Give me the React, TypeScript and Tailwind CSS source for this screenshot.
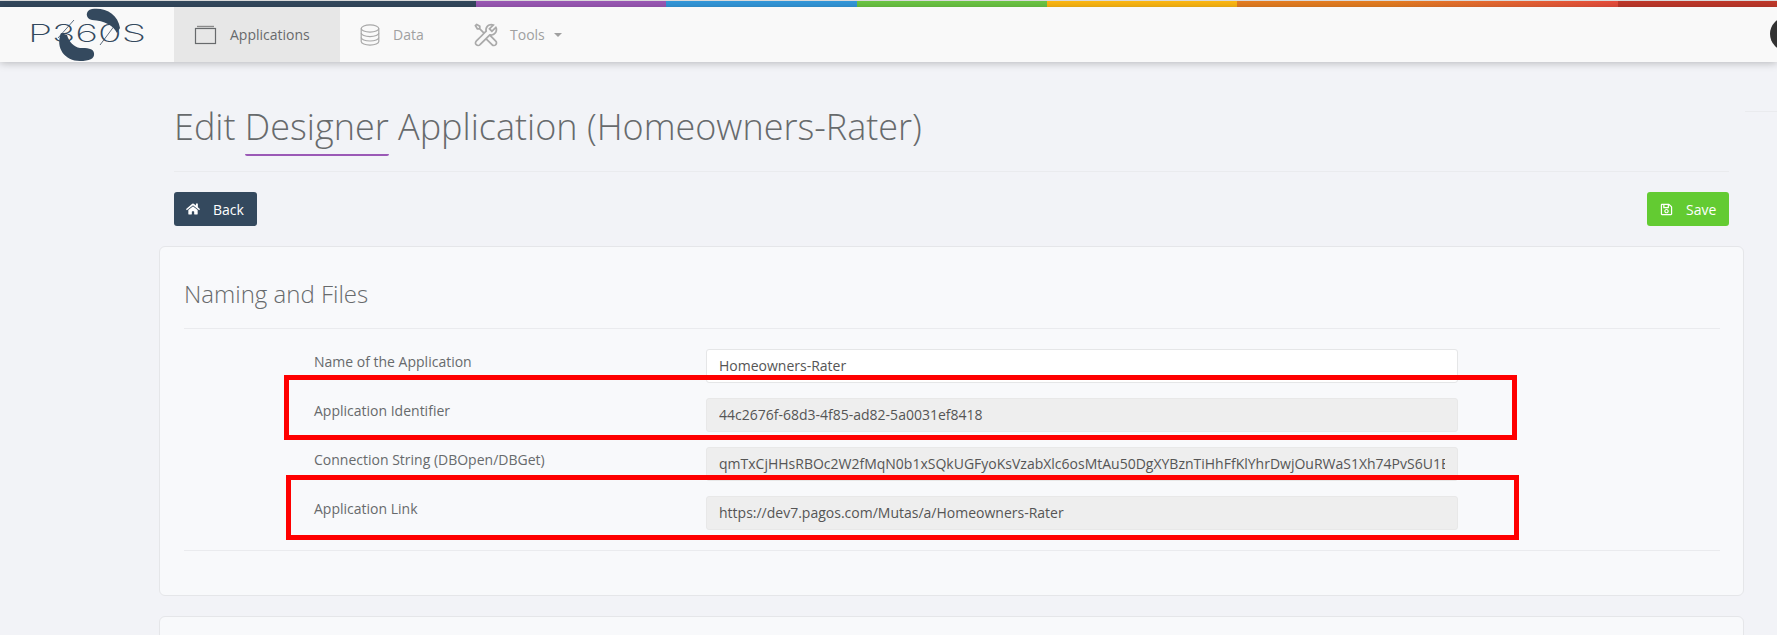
import React from "react";
import { FaHome, FaRegSave } from "react-icons/fa";
import { LiaToolsSolid } from "react-icons/lia";

const font = { fontFamily: '"Open Sans", sans-serif' };

function Logo() {
  return (
    <svg width="122" height="54" viewBox="26 8 122 54" className="shrink-0" aria-label="P360S logo">
      <path d="M92 9 C105 7 118 14 120 28 L117 33 C113 25 105 21 92 20 C85 19 85 10 92 9 Z" fill="#34495e" />
      <path d="M61 33 C55 48 65 61 80 61 C89 61 95 59 94 53 C93 48 87 48 80 48 C74 47 69 42 67 35 Z" fill="#34495e" />
      <text x="28" y="42" fontFamily="Inter, sans-serif" fontWeight="200" fontSize="24" fill="#34495e" textLength="118" lengthAdjust="spacingAndGlyphs">P360S</text>
      <path d="M58 38 L74 20 M100 45 L115 25" stroke="#34495e" strokeWidth="0.8" fill="none" />
    </svg>
  );
}

function AppsIcon() {
  return (
    <svg width="23" height="20" viewBox="0 0 23 20" fill="none" className="mr-[13px] shrink-0">
      <rect x="1.5" y="3.5" width="20" height="15" stroke="#676a6c" strokeWidth="1.2" />
      <path d="M3 1.5h17" stroke="#8a8a8a" strokeWidth="1.4" />
    </svg>
  );
}

function DbIcon() {
  return (
    <svg width="20" height="22" viewBox="0 0 20 22" fill="none" stroke="#a8a8a8" strokeWidth="1.2" className="mr-[13px] shrink-0">
      <ellipse cx="10" cy="4.5" rx="8.8" ry="3.6" />
      <path d="M1.2 4.5v13c0 2 3.9 3.6 8.8 3.6s8.8-1.6 8.8-3.6v-13" />
      <path d="M1.2 9c0 2 3.9 3.6 8.8 3.6s8.8-1.6 8.8-3.6" />
      <path d="M1.2 13.4c0 2 3.9 3.6 8.8 3.6s8.8-1.6 8.8-3.6" />
    </svg>
  );
}

function ColorBar() {
  return (
    <div className="flex h-[7px] border-t border-[#dcdcdc]">
      <div className="w-[476px] bg-[#34495e]" />
      <div className="w-[190px] bg-[#9b59b6]" />
      <div className="w-[191px] bg-[#3498db]" />
      <div className="w-[190px] bg-[#6cc644]" />
      <div className="w-[190px] bg-[#fdb813]" />
      <div className="w-[381px] bg-gradient-to-r from-[#e67e22] from-40% to-[#e74c3c]" />
      <div className="flex-1 bg-[#c0392b]" />
    </div>
  );
}

function Row({ label, value, readOnly }: { label: string; value: string; readOnly?: boolean }) {
  return (
    <div className="flex h-[34px] pl-[130px] pr-[262px]">
      <div className="w-[392px] shrink-0 pt-[3px] text-[14px] leading-[20px] text-[#676a6c]">{label}</div>
      <div
        className={`min-w-0 flex-1 rounded-[3px] border px-[12px] pt-[6px] text-[14px] leading-[20px] text-[#555] ${
          readOnly ? "border-[#e8e8e8] bg-[#eeeeee]" : "border-[#e5e6e7] bg-white"
        }`}
      >
        <div className="overflow-hidden whitespace-nowrap">{value}</div>
      </div>
    </div>
  );
}

export default function App() {
  return (
    <div className="relative h-[635px] w-full overflow-hidden bg-[#f2f3f7]" style={font}>
      <ColorBar />
      <nav className="relative flex h-[55px] items-stretch bg-[#f9f9f9] shadow-[0_1px_8px_rgba(0,0,0,0.25)]">
        <div className="flex w-[174px] items-center pl-[26px]">
          <Logo />
        </div>
        <div className="flex w-[166px] items-center bg-[#e7e7e7] pl-[20px] text-[14px] text-[#676a6c]">
          <AppsIcon />
          Applications
        </div>
        <div className="flex w-[98px] items-center pl-[20px] text-[14px] text-[#a0a0a0]">
          <DbIcon />
          Data
        </div>
        <div className="flex items-center pl-[34px] text-[14px] text-[#a0a0a0]">
          <LiaToolsSolid size={28} className="mr-[10px] text-[#aaa]" />
          Tools
          <span className="ml-[9px] h-0 w-0 border-x-[4px] border-t-[4px] border-x-transparent border-t-[#a0a0a0]" />
        </div>
        <div className="absolute left-[1770px] top-[10px] h-[34px] w-[34px] rounded-full bg-[#333]" />
      </nav>

      <main className="pl-[174px] pr-[48px]">
        <h1 className="mt-[41px] h-[48px] text-[36px] font-light leading-[48px] text-[#676a6c]">
          Edit{" "}
          <span className="relative">
            Designer
            <span className="absolute bottom-[-5px] left-0 right-0 h-[2px] rounded-b-[2px] bg-[#9b59b6]" />
          </span>{" "}
          Application (Homeowners-Rater)
        </h1>
        <hr className="mt-[20px] border-[#eaebee]" />
        <div className="mt-[20px] flex justify-between">
          <button className="flex h-[34px] w-[83px] items-center rounded-[3px] bg-[#34495e] pl-[12px] text-[14px] text-white">
            <FaHome size={14} className="mr-[13px]" />
            Back
          </button>
          <button className="flex h-[34px] w-[82px] items-center rounded-[3px] bg-[#63cb32] pl-[13px] text-[14px] text-white">
            <FaRegSave size={13} className="mr-[13px]" />
            Save
          </button>
        </div>
      </main>

      <section className="ml-[159px] mr-[33px] mt-[20px] h-[350px] rounded-[6px] border border-[#e5e6e9] bg-[#f8f9fb] pl-[24px] pr-[23px]">
        <h2 className="h-[81px] pt-[31px] text-[24px] font-light leading-[32px] text-[#676a6c]">Naming and Files</h2>
        <div className="border-t border-[#eaebee] pb-[20px] pt-[20px]">
          <div className="flex flex-col gap-[15px]">
            <Row label="Name of the Application" value="Homeowners-Rater" />
            <Row label="Application Identifier" value="44c2676f-68d3-4f85-ad82-5a0031ef8418" readOnly />
            <Row
              label="Connection String (DBOpen/DBGet)"
              value="qmTxCjHHsRBOc2W2fMqN0b1xSQkUGFyoKsVzabXlc6osMtAu50DgXYBznTiHhFfKlYhrDwjOuRWaS1Xh74PvS6U1EkQ9"
              readOnly
            />
            <Row label="Application Link" value="https://dev7.pagos.com/Mutas/a/Homeowners-Rater" readOnly />
          </div>
        </div>
        <div className="border-t border-[#eaebee]" />
      </section>
      <section className="ml-[159px] mr-[33px] mt-[20px] h-[60px] rounded-[6px] border border-[#e5e6e9] bg-[#f8f9fb]" />

      <div className="absolute left-[1745px] top-[111px] h-px w-[32px] bg-[#eaebee]" />
      <div className="absolute left-[284px] top-[375px] h-[65px] w-[1233px] border-[5px] border-[#ff0000]" />
      <div className="absolute left-[286px] top-[475px] h-[65px] w-[1233px] border-[5px] border-[#ff0000]" />
    </div>
  );
}
